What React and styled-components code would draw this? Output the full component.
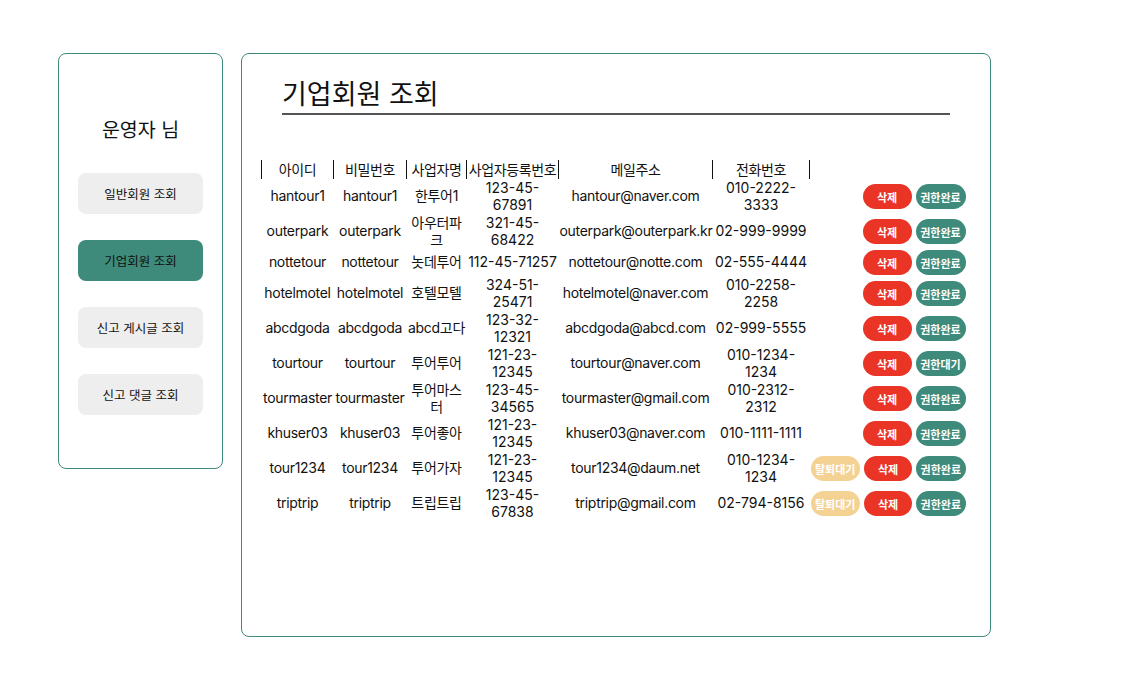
import React from "react";
import styled, { createGlobalStyle } from "styled-components";

const GlobalStyle = createGlobalStyle`
  body {
    margin: 0;
    background: #ffffff;
    font-family: "Inter", "Noto Sans CJK KR", sans-serif;
    color: #111111;
  }
`;

// 열 너비와 자간 (숫자 칸은 자간 그대로)
const columns = [
  { title: "아이디", width: 72, ls: -0.3, pad: 1 },
  { title: "비밀번호", width: 73, ls: -0.3, pad: 1 },
  { title: "사업자명", width: 60, ls: -0.3, pad: 1 },
  { title: "사업자등록번호", width: 92, ls: 0, pad: 1.4 },
  { title: "메일주소", width: 154, ls: -0.3, pad: 1 },
  { title: "전화번호", width: 97, ls: 0, pad: 1 },
];

const members = [
  ["hantour1", "hantour1", "한투어1", "123-45-67891", "hantour@naver.com", "010-2222-3333", false, "권한완료"],
  ["outerpark", "outerpark", "아우터파크", "321-45-68422", "outerpark@outerpark.kr", "02-999-9999", false, "권한완료"],
  ["nottetour", "nottetour", "놋데투어", "112-45-71257", "nottetour@notte.com", "02-555-4444", false, "권한완료"],
  ["hotelmotel", "hotelmotel", "호텔모텔", "324-51-25471", "hotelmotel@naver.com", "010-2258-2258", false, "권한완료"],
  ["abcdgoda", "abcdgoda", "abcd고다", "123-32-12321", "abcdgoda@abcd.com", "02-999-5555", false, "권한완료"],
  ["tourtour", "tourtour", "투어투어", "121-23-12345", "tourtour@naver.com", "010-1234-1234", false, "권한대기"],
  ["tourmaster", "tourmaster", "투어마스터", "123-45-34565", "tourmaster@gmail.com", "010-2312-2312", false, "권한완료"],
  ["khuser03", "khuser03", "투어좋아", "121-23-12345", "khuser03@naver.com", "010-1111-1111", false, "권한완료"],
  ["tour1234", "tour1234", "투어가자", "121-23-12345", "tour1234@daum.net", "010-1234-1234", true, "권한완료"],
  ["triptrip", "triptrip", "트립트립", "123-45-67838", "triptrip@gmail.com", "02-794-8156", true, "권한완료"],
];

const menus = ["일반회원 조회", "기업회원 조회", "신고 게시글 조회", "신고 댓글 조회"];

const App = () => {
  return (
    <>
      <GlobalStyle />
      <StPage>
        <StSide>
          <StSideTitle>운영자 님</StSideTitle>
          <StMenu>
            {menus.map((m) => (
              <StMenuBtn key={m} $active={m === "기업회원 조회"}>
                {m}
              </StMenuBtn>
            ))}
          </StMenu>
        </StSide>

        <StMain>
          <StTitle>기업회원 조회</StTitle>
          <StTable>
            <colgroup>
              {columns.map((c) => (
                <StCol key={c.title} $w={c.width} />
              ))}
              <StCol $w={157} />
            </colgroup>
            <thead>
              <tr>
                {columns.map((c) => (
                  <StTh key={c.title}>{c.title}</StTh>
                ))}
                <StThEmpty />
              </tr>
            </thead>
            <tbody>
              {members.map((row) => (
                <tr key={row[0]}>
                  {row.slice(0, 6).map((v, i) => (
                    <StTd key={i} $ls={columns[i].ls} $pad={columns[i].pad}>
                      {v}
                    </StTd>
                  ))}
                  <StActionTd>
                    <StActions>
                      {row[6] && <StPill $color="#f4d293">탈퇴대기</StPill>}
                      <StPill $color="#ea3426" $w={49}>
                        삭제
                      </StPill>
                      <StPill $color="#3e8a7b">{row[7]}</StPill>
                    </StActions>
                  </StActionTd>
                </tr>
              ))}
            </tbody>
          </StTable>
        </StMain>
      </StPage>
    </>
  );
};

export default App;

const StPage = styled.div`
  display: flex;
  align-items: flex-start;
  gap: 18px;
  padding: 53px 0 0 58px;
`;

const StSide = styled.div`
  width: 165px;
  height: 416px;
  box-sizing: border-box;
  border: 1px solid #3e8a7b;
  border-radius: 8px;
  display: flex;
  flex-direction: column;
  align-items: center;
  padding-top: 62px;
`;

const StSideTitle = styled.div`
  font-size: 19.5px;
  line-height: 28px;
  margin-bottom: 29px;
`;

const StMenu = styled.div`
  display: flex;
  flex-direction: column;
  gap: 26px;
`;

const StMenuBtn = styled.button`
  width: 125px;
  height: 41px;
  border: 0;
  border-radius: 8px;
  background-color: ${(p) => (p.$active ? "#3e8a7b" : "#eeeeee")};
  color: #111111;
  font-family: "Inter", "Noto Sans CJK KR", sans-serif;
  font-size: 12.5px;
  cursor: pointer;
`;

const StMain = styled.div`
  width: 750px;
  height: 584px;
  box-sizing: border-box;
  border: 1px solid #3e8a7b;
  border-radius: 8px;
  padding-top: 25px;
`;

const StTitle = styled.h2`
  margin: 0 40px;
  padding-bottom: 2px;
  border-bottom: 2px solid #555555;
  font-size: 27px;
  font-weight: 400;
  line-height: 32px;
`;

const StTable = styled.table`
  margin: 45px 0 0 19px;
  width: 705px;
  table-layout: fixed;
  border-collapse: collapse;
  font-size: 14px;
`;

const StCol = styled.col`
  width: ${(p) => p.$w}px;
`;

const StTh = styled.th`
  padding: 1px 0;
  font-weight: 400;
  font-size: 14px;
  line-height: 17px;
  letter-spacing: -0.4px;
  white-space: nowrap;
  border-left: 1px solid #111111;
  border-right: 1px solid #111111;
`;

const StThEmpty = styled.th`
  padding: 1px;
`;

const StTd = styled.td`
  padding: 1px ${(p) => p.$pad}px;
  text-align: center;
  line-height: 16.5px;
  letter-spacing: ${(p) => p.$ls}px;
`;

const StActionTd = styled.td`
  padding: 1px;
`;

const StActions = styled.div`
  display: flex;
  justify-content: flex-end;
  align-items: center;
  gap: 4px;
`;

const StPill = styled.button`
  width: ${(p) => p.$w || 50}px;
  height: 25px;
  padding: 0;
  border: 0;
  border-radius: 13px;
  background-color: ${(p) => p.$color};
  color: #ffffff;
  font-family: "Inter", "Noto Sans CJK KR", sans-serif;
  font-size: 11px;
  font-weight: 700;
  cursor: pointer;
`;
